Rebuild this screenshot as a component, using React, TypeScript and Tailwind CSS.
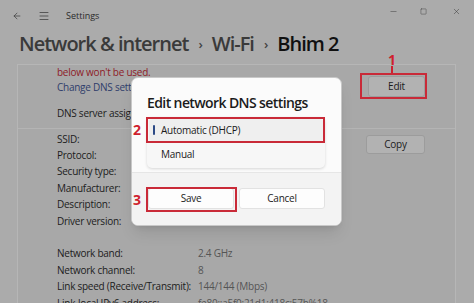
import { ArrowLeft, Menu, Minus, Square, X } from "lucide-react";

const details: [string, string][] = [
  ["SSID:", "Bhim 2"],
  ["Protocol:", "Wi-Fi 4 (802.11n)"],
  ["Security type:", "WPA2-Personal"],
  ["Manufacturer:", "Intel Corporation"],
  ["Description:", "Intel(R) Wireless-AC Adapters"],
  ["Driver version:", ""],
];

const link: [string, string][] = [
  ["Network band:", "2.4 GHz"],
  ["Network channel:", "8"],
  ["Link speed (Receive/Transmit):", "144/144 (Mbps)"],
  ["Link-local IPv6 address:", "fe80::a5f0:21d1:418c:57b%18"],
];

function Row({ label, value }: { label: string; value: string }) {
  return (
    <div className="flex h-[16.4px] items-center">
      <span className="w-[141px] shrink-0">{label}</span>
      <span className="whitespace-nowrap text-[#555555]">{value}</span>
    </div>
  );
}

function Mark({ n, className }: { n: string; className: string }) {
  return (
    <span
      className={`absolute text-[14px] font-bold leading-none text-[#cf1f2e] ${className}`}
    >
      {n}
    </span>
  );
}

export default function App() {
  return (
    <div className="relative h-[303px] w-[474px] overflow-hidden bg-[#ababab] font-['Open_Sans',sans-serif] text-[#1c1c1c]">
      {/* title bar */}
      <div className="flex h-[30px] items-start">
        <div className="flex h-[32px] items-center">
          <ArrowLeft className="ml-[12px] text-[#333]" size={10} strokeWidth={1.6} />
          <Menu className="ml-[16px] text-[#333]" size={12} strokeWidth={1.4} />
          <span className="ml-[16px] text-[9px] text-[#2a2a2a]">Settings</span>
        </div>
        <div className="ml-auto flex h-[22px] items-center text-[#333]">
          <Minus size={9} strokeWidth={1.2} className="mr-[22px]" />
          <Square size={7} strokeWidth={1.4} className="mr-[25px]" />
          <X size={9} strokeWidth={1.3} className="mr-[13px]" />
        </div>
      </div>

      {/* breadcrumb */}
      <div className="flex h-[28px] items-center pl-[19px] text-[20px] leading-[28px] font-semibold tracking-[-1px] text-[#3a3a3a]">
        <span>Network &amp; internet</span>
        <span className="mx-[10px] text-[13px] text-[#444]">›</span>
        <span>Wi-Fi</span>
        <span className="mx-[10px] text-[13px] text-[#444]">›</span>
        <span className="text-[#101010]">Bhim 2</span>
      </div>

      {/* card */}
      <div className="ml-[17px] mt-[6px] w-[439px] border-t border-l border-r border-[#b6b6b6] bg-[#a8a8a8] text-[10px] tracking-[-0.25px]">
        <div className="flex justify-between pl-[39px] pr-[30px] pb-[7px]">
          <div className="leading-[15px]">
            <div className="text-[#8e1b27]">below won't be used.</div>
            <div className="text-[#2f3d6b]">Change DNS settings for this network</div>
            <div className="mt-[11px]">DNS server assignment:</div>
          </div>
          <button className="mt-[11px] h-[21px] w-[57px] rounded-[3px] border border-[#9c9c9c] bg-[#b2b2b2] text-[10px] text-[#1c1c1c]">
            Edit
          </button>
        </div>
        <div className="h-px bg-[#b4b4b4]" />
        <div className="flex justify-between pl-[39px] pr-[30px] pt-[2px]">
          <div>
            {details.map(([l, v]) => (
              <Row key={l} label={l} value={v} />
            ))}
            <div className="h-[16.4px]" />
            {link.map(([l, v]) => (
              <Row key={l} label={l} value={v} />
            ))}
          </div>
          <button className="mt-[4px] h-[19px] w-[59px] rounded-[3px] border border-[#9c9c9c] bg-[#b2b2b2] text-[10px] text-[#1c1c1c]">
            Copy
          </button>
        </div>
      </div>

      {/* annotation 1 */}
      <Mark n="1" className="left-[388px] top-[53px]" />
      <div className="absolute left-[391px] top-[66px] h-[7px] w-[2px] bg-[#cf1f2e]" />
      <div className="absolute left-[360px] top-[73px] h-[26px] w-[67px] border-2 border-[#c92a38]" />

      {/* dialog */}
      <div className="absolute left-[131px] top-[77px] flex h-[149px] w-[211px] flex-col overflow-hidden rounded-[7px] border border-[#c8c8c8] bg-[#fbfbfb] tracking-[-0.25px] text-[#1b1b1b] shadow-lg">
        <div className="pl-[15px] pt-[15px] text-[14px] leading-[19px] font-semibold tracking-[-0.6px]">
          Edit network DNS settings
        </div>
        <div className="ml-[15px] mt-[5px] w-[178px] rounded-[5px] bg-[#f7f7f7] py-[2px] text-[10px] shadow-[0_1px_3px_rgba(0,0,0,0.15)]">
          <div className="mx-[2px] flex h-[22px] items-center rounded-[3px] bg-[#efefef]">
            <div className="ml-[4px] h-[10px] w-[2px] rounded-full bg-[#2d4a86]" />
            <span className="ml-[6px]">Automatic (DHCP)</span>
          </div>
          <div className="mx-[2px] mt-[2px] flex h-[23px] items-center pl-[12px]">Manual</div>
        </div>
        <div className="mt-auto grid h-[53px] grid-cols-2 gap-[5px] border-t border-[#e6e6e6] bg-[#f3f3f3] px-[16px] pt-[15px] text-[10px]">
          <button className="h-[21px] rounded-[3px] border border-[#e2e2e2] bg-[#fdfdfd]">Save</button>
          <button className="h-[21px] rounded-[3px] border border-[#e2e2e2] bg-[#fdfdfd]">Cancel</button>
        </div>
      </div>

      {/* annotations 2 & 3 */}
      <Mark n="2" className="left-[133px] top-[123px]" />
      <div className="absolute left-[146px] top-[117px] h-[26px] w-[179px] border-2 border-[#c92a38]" />
      <Mark n="3" className="left-[133px] top-[193px]" />
      <div className="absolute left-[146px] top-[187px] h-[25px] w-[91px] border-2 border-[#c92a38]" />
    </div>
  );
}
